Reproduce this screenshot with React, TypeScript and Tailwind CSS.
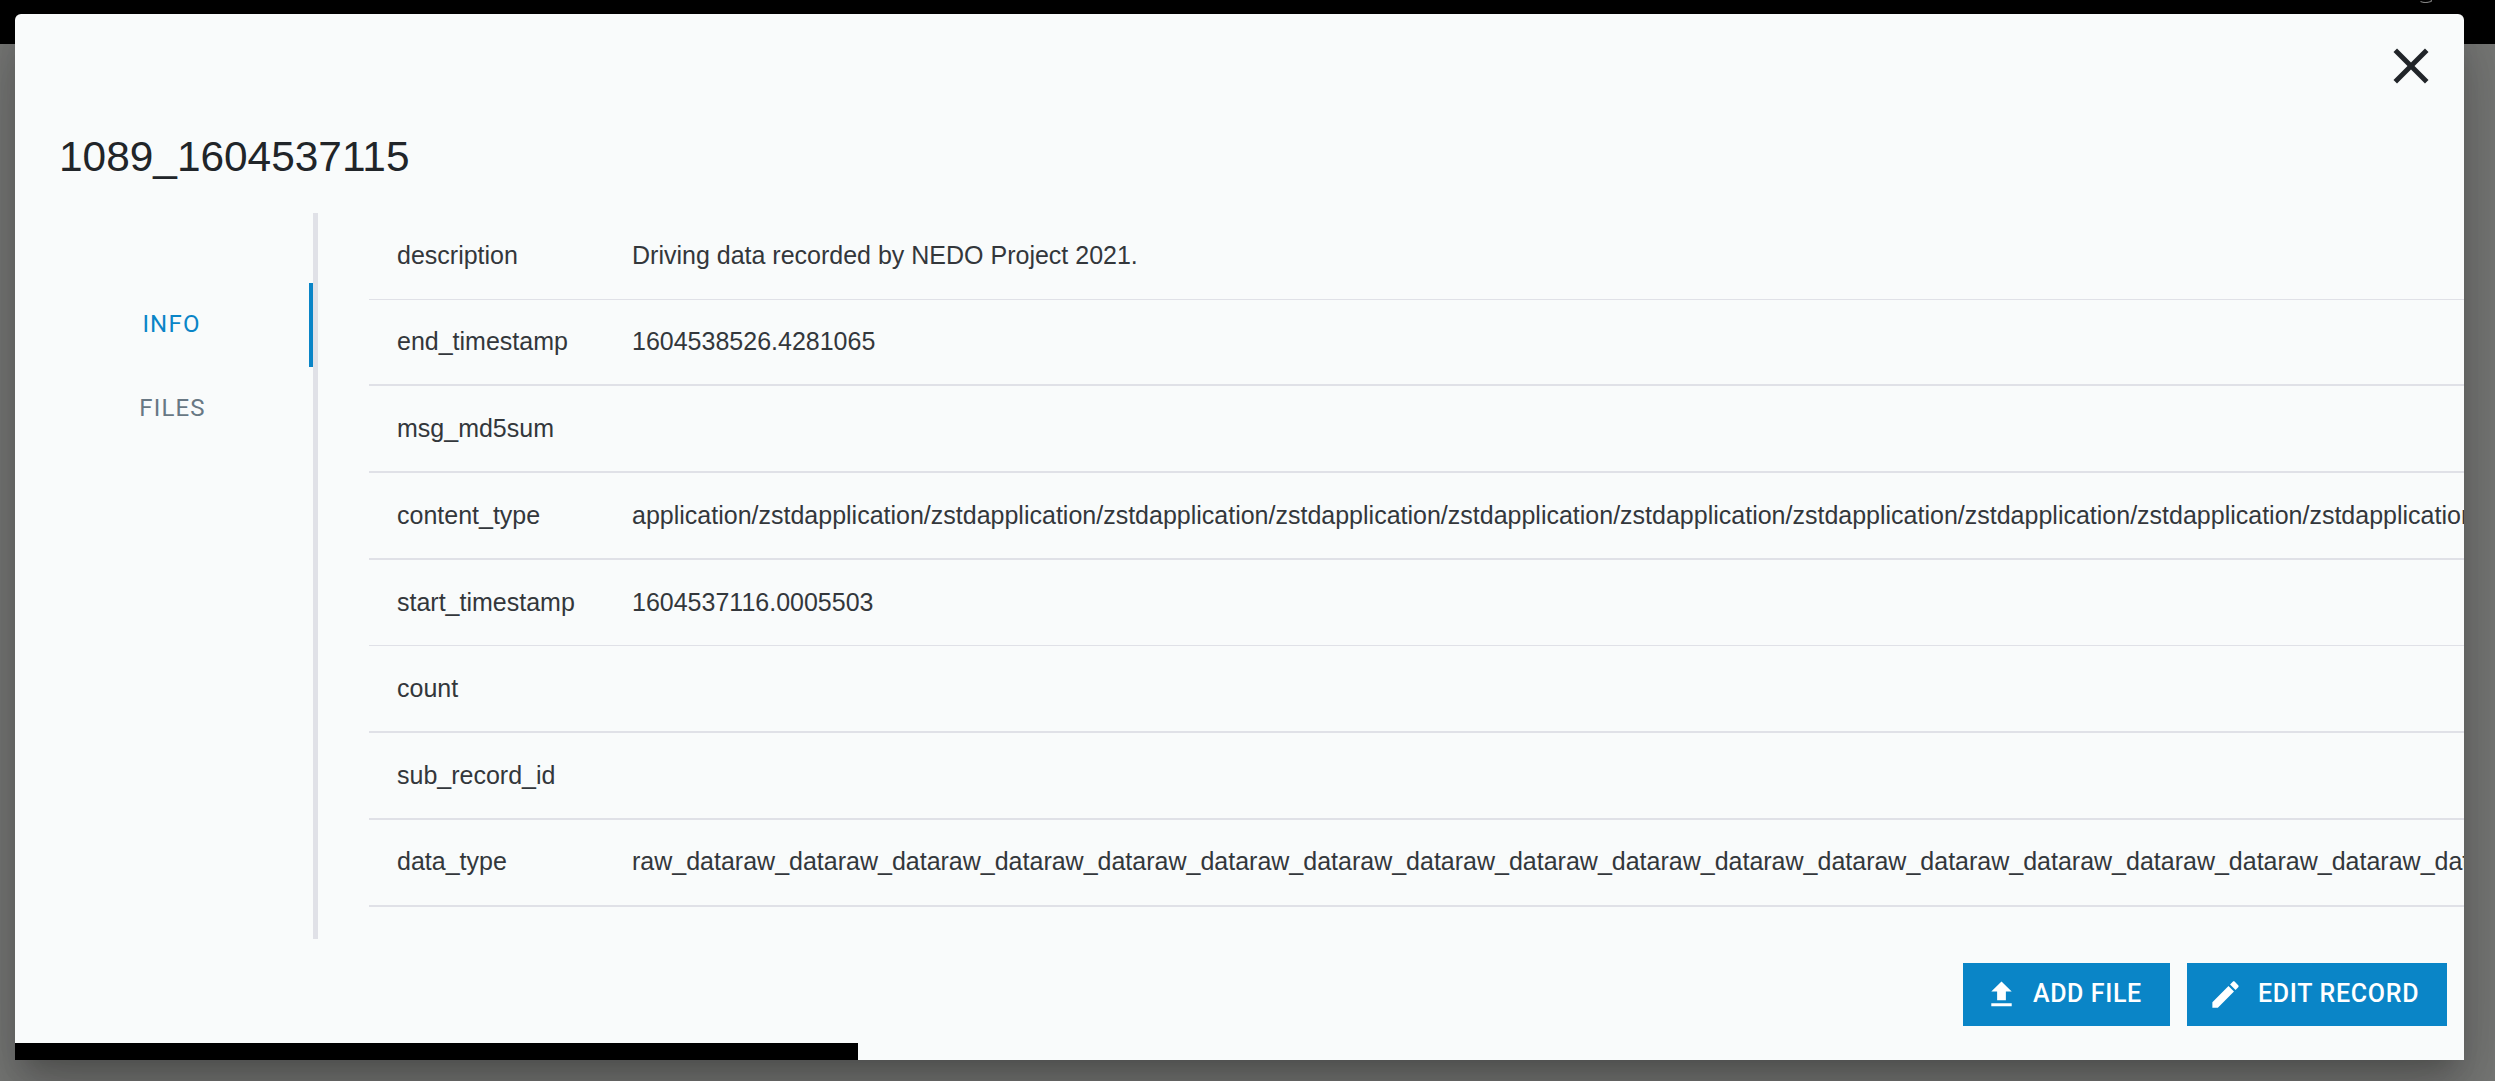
const rows: { k: string; v: string; b: string }[] = [
  { k: "description", v: "Driving data recorded by NEDO Project 2021.", b: "border-b" },
  { k: "end_timestamp", v: "1604538526.4281065", b: "border-b-2" },
  { k: "msg_md5sum", v: "", b: "border-b-2" },
  { k: "content_type", v: "application/zstd".repeat(20), b: "border-b-2" },
  { k: "start_timestamp", v: "1604537116.0005503", b: "border-b" },
  { k: "count", v: "", b: "border-b-2" },
  { k: "sub_record_id", v: "", b: "border-b-2" },
  { k: "data_type", v: "raw_data".repeat(24), b: "border-b-2" },
];

function Close() {
  return (
    <svg viewBox="0 0 24 24" className="w-[60px] h-[60px] fill-[#212529]">
      <path d="M19 6.41L17.59 5 12 10.59 6.41 5 5 6.41 10.59 12 5 17.59 6.41 19 12 13.41 17.59 19 19 17.59 13.41 12z" />
    </svg>
  );
}

function Upload() {
  return (
    <svg viewBox="0 0 24 24" className="w-[35px] h-[35px] fill-white shrink-0">
      <path d="M9 16h6v-6h4l-7-7-7 7h4zm-4 2h14v2H5z" />
    </svg>
  );
}

function Pencil() {
  return (
    <svg viewBox="0 0 24 24" className="w-[35px] h-[35px] fill-white shrink-0">
      <path d="M3 17.25V21h3.75L17.81 9.94l-3.75-3.75L3 17.25zM20.71 7.04c.39-.39.39-1.02 0-1.41l-2.34-2.34c-.39-.39-1.02-.39-1.41 0l-1.83 1.83 3.75 3.75 1.83-1.83z" />
    </svg>
  );
}

export default function App() {
  return (
    <div className="relative w-[2495px] h-[1081px] overflow-hidden bg-[#787977] font-['Liberation_Sans',Arial,sans-serif]">
      <div className="h-[44px] bg-black" />
      <svg viewBox="0 0 12 3" className="absolute left-[2420px] top-0 w-[12px] h-[3px]">
        <path d="M0.5 1.5 Q5 3.5 11 1.5 L11.5 0" fill="none" stroke="#8a8a8a" strokeWidth="1.2" />
      </svg>

      <div className="absolute left-[15px] top-[14px] w-[2449px] h-[1046px] rounded-tl-[6px] rounded-tr-[6px] bg-[#f9fbfb] overflow-hidden flex flex-col shadow-[0_17px_24px_-11px_rgba(0,0,0,0.2),0_38px_60px_5px_rgba(0,0,0,0.14),0_14px_73px_13px_rgba(0,0,0,0.12)]">
        <div className="flex justify-end h-[83px] pt-[22px] pr-[23px] shrink-0">
          <Close />
        </div>
        <h2 className="h-[116px] pl-[44px] pt-[35px] text-[42.4px] leading-[50px] font-normal text-[#212529] shrink-0">
          1089_1604537115
        </h2>

        <div className="flex h-[726px] shrink-0 pl-[15px]">
          <div className="w-[283px] border-r-[5px] border-[#e0e1e7] pt-[70px] shrink-0 box-content">
            <div className="w-[283px] h-[84px] pb-[2px] flex items-center justify-center text-[24px] tracking-[1.2px] text-[#0a85c7] font-['Roboto',sans-serif] shadow-[inset_-4px_0_0_#0a85c7]">
              INFO
            </div>
            <div className="w-[283px] h-[84px] pb-[2px] pl-[2px] flex items-center justify-center text-[24px] tracking-[1.2px] text-[#687884] font-['Roboto',sans-serif]">
              FILES
            </div>
          </div>
          <div className="flex-1 min-w-0 ml-[51px] overflow-hidden">
            {rows.map((r) => (
              <div
                key={r.k}
                className={`flex items-center h-[86.7px] pl-[28px] border-[#e0e1e7] text-[25px] text-[#33373b] whitespace-nowrap ${r.b}`}
              >
                <span className="w-[235px] shrink-0">{r.k}</span>
                <span>{r.v}</span>
              </div>
            ))}
          </div>
        </div>

        <div className="flex justify-end gap-[17px] mt-[24px] pr-[17px] shrink-0">
          <button className="h-[63px] w-[207px] pl-[21px] pb-[1px] flex items-center gap-[14px] bg-[#0a85c7] text-white text-[25px] tracking-[0.6px] font-['Roboto',sans-serif] font-medium">
            <Upload />
            ADD FILE
          </button>
          <button className="h-[63px] w-[260px] pl-[21px] pb-[1px] flex items-center gap-[15px] bg-[#0a85c7] text-white text-[25px] tracking-[0.7px] font-['Roboto',sans-serif] font-medium">
            <Pencil />
            EDIT RECORD
          </button>
        </div>

        <div className="absolute left-0 bottom-0 w-[843px] h-[17px] bg-black" />
      </div>
    </div>
  );
}
